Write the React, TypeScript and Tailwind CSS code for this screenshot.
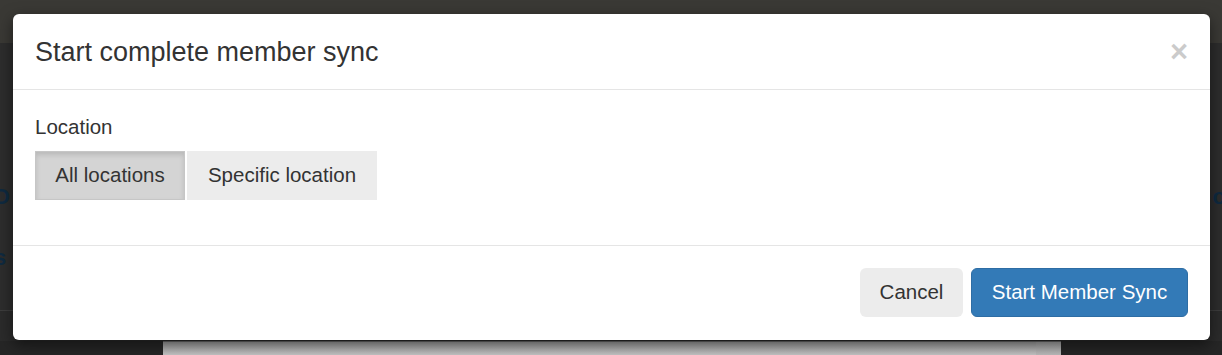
import React from "react";

function PageBehind() {
  return (
    <div className="flex h-[355px] flex-col bg-[#2d2d2d]">
      <div className="h-[43px] shrink-0 bg-[#3a3935]" />
      <div className="flex h-[267px] shrink-0 flex-col">
        <div className="mt-[139px] flex justify-between text-[22px] font-bold leading-[30px] text-[#0f2a40]">
          <span className="-ml-[6px]">D</span>
          <span className="-mr-[4px]">o</span>
        </div>
        <div className="mt-[31px] text-[22px] font-bold leading-[30px] text-[#0f2a40]">
          <span className="-ml-[6px]">s</span>
        </div>
      </div>
      <div className="h-[31px] shrink-0 border-t border-[#3d3d3d] bg-[#2b2b2b]" />
      <div className="flex flex-1 bg-[#262626]">
        <div className="ml-[163px] flex w-[898px] border-t border-[#6a6a6a]">
          <div className="flex-1 bg-gradient-to-b from-[#9c9c9c] to-[#c6c6c6]" />
          <div className="w-[25px] bg-gradient-to-b from-[#a4a4a4] to-[#bcbcbc]" />
        </div>
      </div>
    </div>
  );
}

export default function App() {
  return (
    <div className="relative h-[355px] w-[1222px] overflow-hidden font-['Liberation_Sans',Arial,sans-serif] text-[#333]">
      <PageBehind />

      <div className="absolute left-[13px] top-[14px] w-[1197px] rounded-[6px] bg-white shadow-[0_5px_15px_rgba(0,0,0,0.5)]">
        <div className="flex items-center justify-between border-b border-[#e5e5e5] px-[22px] pb-[22px] pt-[22px]">
          <h4 className="text-[27px] leading-[30px] text-[#333]">Start complete member sync</h4>
          <button className="text-[31px] font-bold leading-none text-black opacity-20">×</button>
        </div>

        <div className="px-[22px] pb-[22px] pt-[22px]">
          <label className="mb-[9px] block text-[20.5px] leading-[30px]">Location</label>
          <div className="mb-[23px] flex gap-[2px]">
            <button className="h-[49px] w-[150px] border border-[#c6c6c6] bg-[#d4d4d4] text-[20.5px] shadow-[inset_0_3px_5px_rgba(0,0,0,0.125)]">
              All locations
            </button>
            <button className="h-[49px] w-[190px] bg-[#ececec] text-[20.5px]">Specific location</button>
          </div>
        </div>

        <div className="flex justify-end gap-[8px] border-t border-[#e5e5e5] px-[22px] pb-[23px] pt-[22px]">
          <button className="h-[49px] w-[103px] rounded-[6px] bg-[#ececec] text-[20.5px] text-[#333]">
            Cancel
          </button>
          <button className="h-[49px] w-[217px] rounded-[6px] border border-[#2e6da4] bg-[#337ab7] text-[20.5px] text-white">
            Start Member Sync
          </button>
        </div>
      </div>
    </div>
  );
}
